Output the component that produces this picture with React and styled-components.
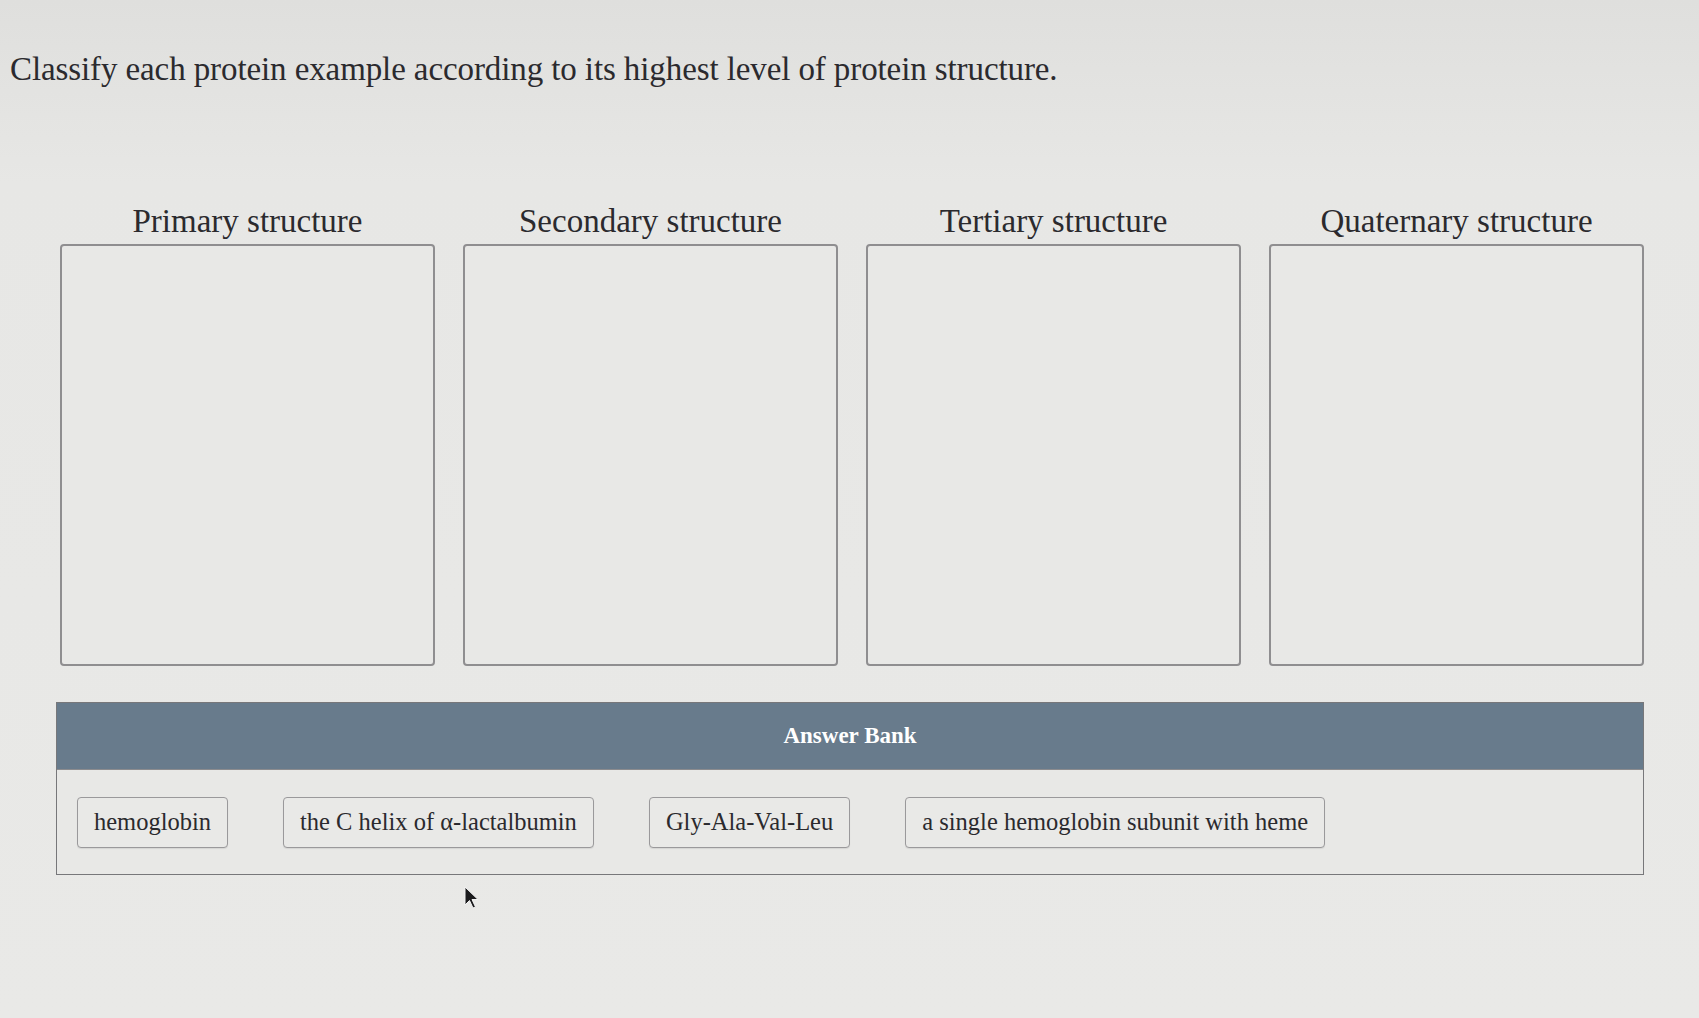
import React from 'react';
import styled, { createGlobalStyle } from 'styled-components';

const GlobalStyle = createGlobalStyle`
  html, body {
    margin: 0;
    padding: 0;
  }
  body {
    background: linear-gradient(180deg, #dfdfdd 0%, #e7e7e5 18%, #e9e9e7 100%);
    font-family: "Liberation Serif", "Times New Roman", serif;
    color: #2b2a2e;
  }
`;

const categories = [
  'Primary structure',
  'Secondary structure',
  'Tertiary structure',
  'Quaternary structure',
];

const answers = [
  'hemoglobin',
  'the C helix of α-lactalbumin',
  'Gly-Ala-Val-Leu',
  'a single hemoglobin subunit with heme',
];

const Page = styled.div`
  position: relative;
  width: 1699px;
  height: 1018px;
  box-sizing: border-box;
  padding: 49px 0 0 10px;
`;

const Prompt = styled.h1`
  margin: 0;
  font-size: 33px;
  font-weight: 400;
  line-height: 40px;
  letter-spacing: -0.1px;
`;

const Columns = styled.div`
  display: grid;
  grid-template-columns: repeat(4, 375px);
  column-gap: 28px;
  margin: 113px 0 0 50px;
`;

const Column = styled.div`
  display: flex;
  flex-direction: column;
  align-items: center;
`;

const Label = styled.div`
  font-size: 33px;
  line-height: 38px;
  margin-bottom: 4px;
`;

const DropZone = styled.div`
  width: 100%;
  height: 422px;
  box-sizing: border-box;
  border: 2px solid #8f8e90;
  border-radius: 4px;
  background: #e8e8e6;
`;

const Bank = styled.section`
  margin: 36px 0 0 46px;
  width: 1588px;
  box-sizing: border-box;
  border: 1.5px solid #77777a;
`;

const BankHeader = styled.div`
  height: 66px;
  display: flex;
  align-items: center;
  justify-content: center;
  background: #687b8c;
  color: #ffffff;
  font-weight: 700;
  font-size: 23px;
`;

const BankBody = styled.div`
  display: flex;
  align-items: center;
  gap: 55px;
  height: 104px;
  padding: 0 20px;
  background: #e8e8e6;
  border-top: 1.5px solid #8b8b8e;
`;

const Chip = styled.div`
  height: 51px;
  box-sizing: border-box;
  display: flex;
  align-items: center;
  padding: 0 16px;
  font-size: 24.5px;
  border: 1.5px solid #9a999b;
  border-radius: 4px;
  background: #e9e9e7;
  box-shadow: 0 1px 1px rgba(0, 0, 0, 0.08);
`;

const Pointer = styled.svg`
  position: absolute;
  left: 464px;
  top: 886px;
`;

export default function App() {
  return (
    <>
      <GlobalStyle />
      <Page>
        <Prompt>Classify each protein example according to its highest level of protein structure.</Prompt>
        <Columns>
          {categories.map((name) => (
            <Column key={name}>
              <Label>{name}</Label>
              <DropZone />
            </Column>
          ))}
        </Columns>
        <Bank>
          <BankHeader>Answer Bank</BankHeader>
          <BankBody>
            {answers.map((text) => (
              <Chip key={text}>{text}</Chip>
            ))}
          </BankBody>
        </Bank>
        <Pointer width="16" height="24" viewBox="0 0 16 24">
          <path d="M1 1 L1 19 L5.5 14.5 L9 22 L11.5 21 L8 13.5 L14 13.5 Z" fill="#1b1b1d" stroke="#f2f2f2" strokeWidth="1" />
        </Pointer>
      </Page>
    </>
  );
}
